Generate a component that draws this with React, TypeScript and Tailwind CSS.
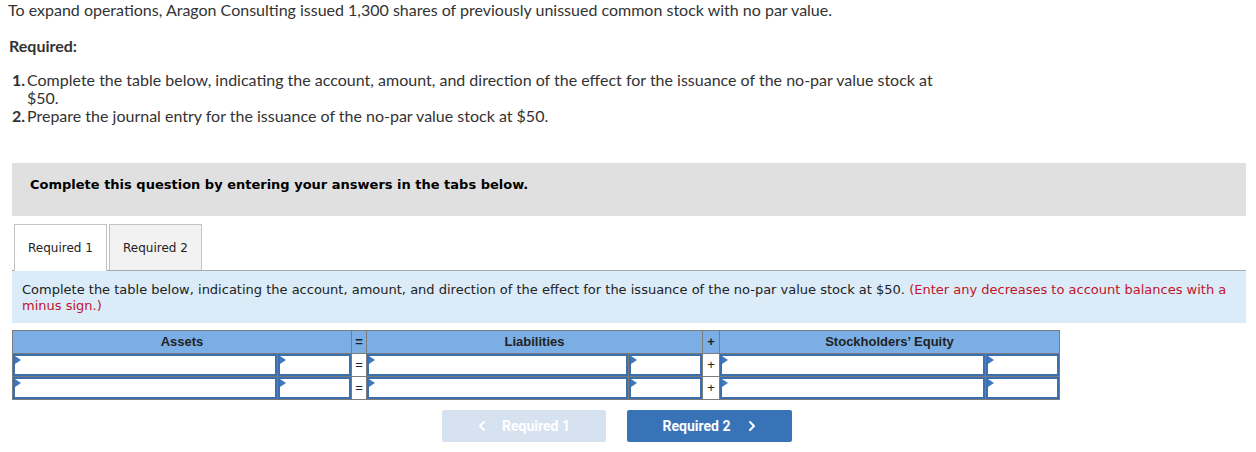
import { ChevronLeft, ChevronRight } from "lucide-react";

const verdana = "font-['DejaVu_Sans','Verdana',sans-serif]";

function Flag() {
  return (
    <span className="absolute left-0 top-0 w-0 h-0 border-t-[4px] border-b-[4px] border-l-[6px] border-t-transparent border-b-transparent border-l-[#3f78c0]" />
  );
}

function Field() {
  return (
    <div className="relative bg-white border-2 border-[#3b6fae] h-[22px]">
      <Flag />
    </div>
  );
}

function Sign({ s }: { s: string }) {
  return (
    <div className="bg-white h-[22px] flex items-center justify-center text-[13px] text-[#222] font-['Liberation_Sans',Arial,sans-serif]">
      {s}
    </div>
  );
}

function Row() {
  return (
    <>
      <Field />
      <Field />
      <Sign s="=" />
      <Field />
      <Field />
      <Sign s="+" />
      <Field />
      <Field />
    </>
  );
}

export default function App() {
  const head =
    "bg-[#7aaee5] h-[22px] flex items-center justify-center text-[13px] font-bold text-[#222] font-['Liberation_Sans',Arial,sans-serif]";

  return (
    <div className="w-[1256px] h-[452px] bg-white overflow-hidden">
      {/* Question text */}
      <div className="pl-2 pt-px text-[16px] leading-[18px] text-[#333] font-['Lato','Open_Sans',sans-serif]">
        <p>
          To expand operations, Aragon Consulting issued 1,300 shares of previously unissued common stock with
          no par value.
        </p>
        <p className="mt-[18px] font-bold pl-px">Required:</p>
        <ol className="mt-4 pl-1">
          <li className="flex">
            <span className="font-bold w-[15px] shrink-0">1.</span>
            <span>
              Complete the table below, indicating the account, amount, and direction of the effect for the
              issuance of the no-par value stock at
              <br />
              $50.
            </span>
          </li>
          <li className="flex">
            <span className="font-bold w-[15px] shrink-0">2.</span>
            <span>Prepare the journal entry for the issuance of the no-par value stock at $50.</span>
          </li>
        </ol>
      </div>

      <div className="ml-3 w-[1234px] mt-[38px]">
        {/* Instruction bar */}
        <div className={`h-[53px] bg-[#e0e0e0] pl-[18px] pt-[14px] text-[13px] leading-4 font-bold text-black ${verdana}`}>
          Complete this question by entering your answers in the tabs below.
        </div>

        {/* Tabs */}
        <div className={`mt-2 flex items-end border-b border-[#a9a9a9] pl-[2px] gap-[2px] text-[12px] text-[#222] ${verdana}`}>
          <div className="w-[93px] h-[47px] bg-white border border-b-0 border-[#c3c3c3] -mb-px flex items-center justify-center">
            Required 1
          </div>
          <div className="w-[93px] h-[46px] bg-[#f2f2f2] border border-b-0 border-[#c3c3c3] flex items-center justify-center">
            Required 2
          </div>
        </div>

        {/* Tab body */}
        <div className={`bg-[#dbebf8] pl-[10px] pt-[11px] pb-[9px] h-[52px] text-[13px] leading-4 text-[#222] ${verdana}`}>
          Complete the table below, indicating the account, amount, and direction of the effect for the issuance
          of the no-par value stock at $50.{" "}
          <span className="text-[#c0142a]">
            (Enter any decreases to account balances with a
            <br />
            minus sign.)
          </span>
        </div>

        {/* Effects table */}
        <div className="mt-[7px] w-[1048px] bg-[#7b7b7b] p-px grid grid-cols-[264px_73px_14px_261px_73px_16px_265px_73px] gap-px">
          <div className={`${head} col-span-2`}>Assets</div>
          <div className={head}>=</div>
          <div className={`${head} col-span-2`}>Liabilities</div>
          <div className={head}>+</div>
          <div className={`${head} col-span-2`}>Stockholders’ Equity</div>
          <Row />
          <Row />
        </div>
      </div>

      {/* Navigation buttons */}
      <div className="mt-[10px] w-[1234px] flex justify-center gap-[21px] font-['Roboto',sans-serif] text-[14px] font-bold text-white">
        <button className="w-[164px] h-[32px] rounded-[2px] bg-[#d6e2f0] flex items-center justify-center gap-[12px] pr-1">
          <ChevronLeft size={16} strokeWidth={3} />
          <span>Required 1</span>
        </button>
        <button className="w-[165px] h-[32px] rounded-[2px] bg-[#3873b8] flex items-center justify-center gap-[14px] pl-1">
          <span>Required 2</span>
          <ChevronRight size={16} strokeWidth={3} />
        </button>
      </div>
    </div>
  );
}
